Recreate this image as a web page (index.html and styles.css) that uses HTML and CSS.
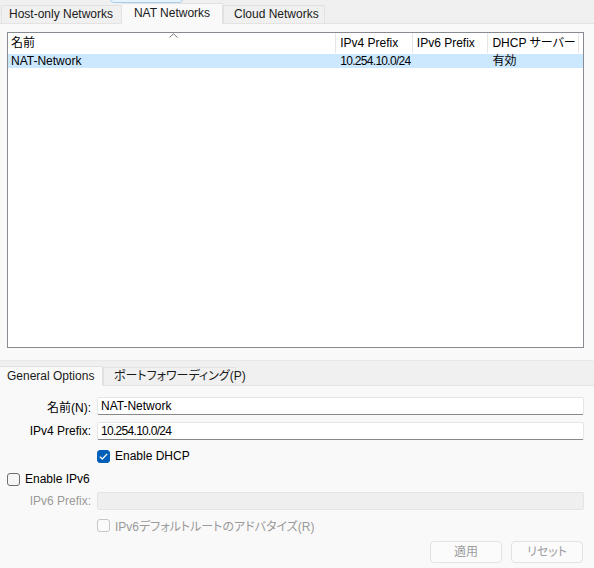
FILE: index.html
```html
<!DOCTYPE html>
<html lang="ja">
<head>
<meta charset="utf-8">
<link rel="stylesheet" href="styles.css">
</head>
<body>
<div class="app">
  <div class="topbar">
    <div class="focus-pill"></div>
    <div class="tab tab-first">Host-only Networks</div>
    <div class="tab tab-active">NAT Networks</div>
    <div class="tab">Cloud Networks</div>
  </div>
  <div class="toppanel">
    <div class="table">
      <div class="thead">
        <div class="th c1">名前<svg class="sort" width="9" height="5" viewBox="0 0 9 5"><path d="M0.5 4.5 L4.5 0.8 L8.5 4.5" fill="none" stroke="#777" stroke-width="1"/></svg></div>
        <div class="th c2">IPv4 Prefix</div>
        <div class="th c3">IPv6 Prefix</div>
        <div class="th c4">DHCP サーバー</div>
        <div class="th c5"></div>
      </div>
      <div class="row selected">
        <div class="td c1">NAT-Network</div>
        <div class="td c2"><span class="num">10.254.10.0/24</span></div>
        <div class="td c3"></div>
        <div class="td c4">有効</div>
        <div class="td c5"></div>
      </div>
    </div>
  </div>
  <div class="bottombar">
    <div class="tab tab-active btab1">General Options</div>
    <div class="tab btab2">ポートフォワーディング(P)</div>
  </div>
  <div class="form">
    <div class="frow r1">
      <label class="lbl">名前(N):</label>
      <div class="input">NAT-Network</div>
    </div>
    <div class="frow r2">
      <label class="lbl">IPv4 Prefix:</label>
      <div class="input"><span class="num">10.254.10.0/24</span></div>
    </div>
    <div class="frow r3">
      <span></span>
      <div class="check"><span class="box checked"><svg width="9" height="7" viewBox="0 0 9 7"><path d="M0.8 3.6 L3.3 6 L8.2 0.9" fill="none" stroke="#fff" stroke-width="1.3"/></svg></span>Enable DHCP</div>
    </div>
    <div class="frow-full r4">
      <div class="check"><span class="box"></span>Enable IPv6</div>
    </div>
    <div class="frow r5">
      <label class="lbl disabled">IPv6 Prefix:</label>
      <div class="input input-disabled"></div>
    </div>
    <div class="frow r6">
      <span></span>
      <div class="check disabled"><span class="box box-disabled"></span>IPv6デフォルトルートのアドバタイズ(R)</div>
    </div>
    <div class="buttons">
      <div class="btn">適用</div>
      <div class="btn">リセット</div>
    </div>
  </div>
</div>
</body>
</html>
```
FILE: styles.css
```css
* { box-sizing: border-box; }
html, body { margin: 0; padding: 0; }
body {
  width: 594px;
  height: 568px;
  background: #f9f9f9;
  font-family: "Liberation Sans", "Noto Sans CJK JP", sans-serif;
  font-size: 12px;
  font-feature-settings: "palt";
  color: #000;
  overflow: hidden;
}
.app { display: flex; flex-direction: column; height: 568px; }
.num { letter-spacing: -0.7px; }

.topbar {
  position: relative;
  height: 24px;
  background: #f0f0f0;
  border-bottom: 1px solid #e3e3e3;
  display: flex;
  align-items: flex-end;
  padding-left: 1px;
}
.focus-pill {
  position: absolute;
  left: 110px;
  top: -3px;
  width: 73px;
  height: 6px;
  border: 1px solid #a9cdef;
  background: #e6f1fb;
  border-radius: 0 0 4px 4px;
}
.tab {
  height: 18px;
  line-height: 17px;
  padding: 0 10px 0 7px;
  border: 1px solid #e2e2e2;
  border-bottom: none;
  background: #f0f0f0;
  white-space: nowrap;
  color: #1a1a1a;
}
.topbar .tab-first { width: 121px; padding-left: 7px; }
.topbar .tab-active {
  width: 101px;
  height: 21px;
  line-height: 18px;
  margin-bottom: -1px;
  background: #f9f9f9;
  text-align: center;
  padding: 0;
  border-left: none;
  position: relative;
  z-index: 1;
}
.topbar .tab:last-child { width: 102px; padding-left: 10px; border-left: 1px solid #e2e2e2; }

.toppanel {
  height: 336px;
  padding: 8px 10px 0 7px;
  background: #f9f9f9;
}
.table {
  height: 316px;
  border: 1px solid #888c92;
  background: #fff;
}
.thead, .row { display: flex; }
.thead { height: 21px; }
.th {
  position: relative;
  height: 20px;
  line-height: 21px;
  padding-left: 4px;
  border-right: 1px solid #e5e5e5;
  white-space: nowrap;
}
.th.c1 { padding-left: 3px; }
.sort { position: absolute; left: 161px; top: 0px; }
.c1 { width: 330px; }
.c2 { width: 77px; }
.c3 { width: 76px; }
.c4 { width: 91px; overflow: hidden; }
.c5 { flex: 1; border-right: none; }
.row { height: 14px; line-height: 14px; }
.row.selected { background: #cce8ff; }
.td { padding-left: 4px; white-space: nowrap; }
.td.c1 { padding-left: 3px; }

.bottombar {
  height: 26px;
  background: #f0f0f0;
  border-top: 1px solid #e8e8e8;
  border-bottom: 1px solid #e3e3e3;
  display: flex;
  align-items: flex-end;
}
.bottombar .tab-active {
  width: 103px;
  height: 20px;
  line-height: 19px;
  margin-bottom: -1px;
  background: #f9f9f9;
  padding-left: 7px;
  border-left: none;
  position: relative;
  z-index: 1;
}
.bottombar .btab2 { width: 133px; height: 18px; padding-left: 10px; }

.form {
  flex: 1;
  padding: 11px 10px 0 0;
  display: flex;
  flex-direction: column;
}
.frow {
  display: grid;
  grid-template-columns: 91px 1fr;
  column-gap: 6px;
  align-items: center;
  height: 18px;
}
.frow-full { height: 18px; display: flex; align-items: center; padding-left: 7px; }
.r2 { margin-top: 7px; }
.r3 { margin-top: 7px; }
.r4 { margin-top: 5px; }
.r5 { margin-top: 4px; }
.r6 { margin-top: 6px; }
.lbl { text-align: right; white-space: nowrap; }
.disabled { color: #9a9a9a; }
.input {
  height: 18px;
  line-height: 17px;
  background: #fff;
  border: 1px solid #e6e6e6;
  border-bottom: 1px solid #878787;
  border-radius: 2px;
  padding-left: 3px;
}
.input-disabled {
  background: #efefef;
  border: 1px solid #e4e4e4;
}
.check { display: flex; align-items: center; white-space: nowrap; }
.box {
  width: 13px;
  height: 13px;
  border: 1px solid #6e6e6e;
  border-radius: 3px;
  background: #f6f6f6;
  margin-right: 5px;
  display: flex;
  align-items: center;
  justify-content: center;
}
.box.checked { background: #005fb8; border-color: #005fb8; }
.box-disabled { border-color: #c6c6c6; background: #fbfbfb; }

.buttons {
  display: flex;
  justify-content: flex-end;
  gap: 9px;
  margin-top: 7px;
  padding-right: 1px;
}
.btn {
  width: 72px;
  height: 22px;
  line-height: 20px;
  text-align: center;
  border: 1px solid #e3e3e3;
  border-radius: 4px;
  background: #fbfbfb;
  color: #9d9d9d;
}
```
